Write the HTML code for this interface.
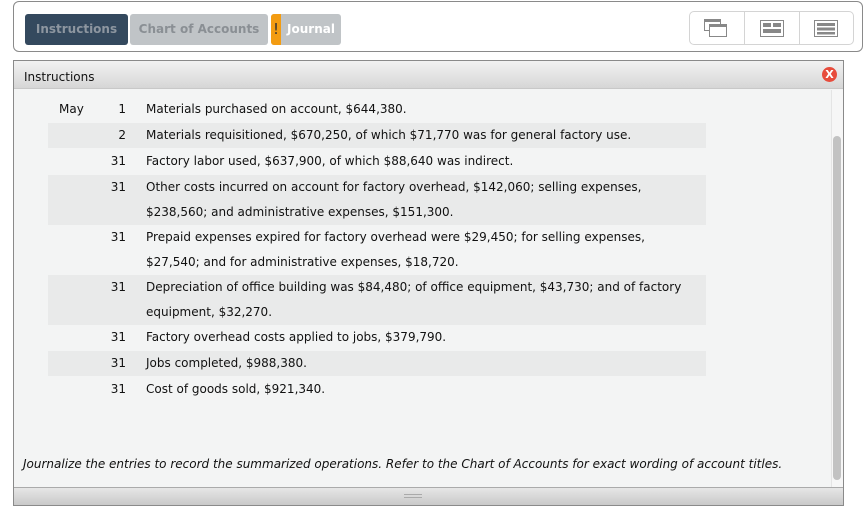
<!DOCTYPE html>
<html><head><style>
*{margin:0;padding:0;box-sizing:border-box}
body{width:868px;height:514px;background:#fff;font-family:"DejaVu Sans","Liberation Sans",sans-serif;position:relative;overflow:hidden}
.top{position:absolute;left:13px;top:1px;width:850px;height:51px;border:1px solid #8a8a8a;border-radius:6px;background:#fff}
.btn{position:absolute;top:12px;height:31px;border-radius:3px;font-weight:bold;font-size:12px;line-height:31px;text-align:center;color:#8a8f94;background:#c0c4c7}
.grp{position:absolute;left:675px;top:9px;width:165px;height:34px;border:1px solid #d4d4d4;border-radius:5px}
.grp div{position:absolute;top:0;height:32px;border-left:1px solid #d4d4d4}
.panel{position:absolute;left:13px;top:60px;width:831px;height:446px;border:1px solid #8a8a8a;background:#f3f4f4}
.hdr{height:28px;background:linear-gradient(#f2f2f2,#d6d6d6);border-bottom:1px solid #c8c8c8;font-size:12px;line-height:32px;padding-left:10px;color:#111}
.row{position:absolute;left:34px;width:658px;font-size:12px;line-height:25px;color:#111}
.row.s{background:#e9eaea}
.m{position:absolute;left:11px}
.d{position:absolute;left:40px;width:38px;text-align:right}
.t{margin-left:98px;white-space:nowrap}
.foot{position:absolute;left:0;bottom:0;width:829px;height:18px;background:linear-gradient(#e6e6e6,#c9c9c9);border-top:1px solid #aaa}
</style></head><body>
<div class="top">
 <div class="btn" style="left:11px;width:103px;background:#34495e;color:#8d96a0">Instructions</div>
 <div class="btn" style="left:116px;width:138px">Chart of Accounts</div>
 <div class="btn" style="left:257px;width:70px;color:#fff;overflow:hidden"><span style="position:absolute;left:0;top:0;width:10px;height:31px;background:#f39c12;color:#333;font-weight:normal;font-size:15px">!</span><span style="margin-left:10px">Journal</span></div>
 <div class="grp">
  <div style="left:54px"></div><div style="left:109px"></div>
  <svg style="position:absolute;left:14px;top:7px" width="24" height="20"><rect x="0.5" y="0.5" width="16" height="11" fill="#fff" stroke="#888"/><rect x="0" y="0" width="17" height="3" fill="#888"/><rect x="5.5" y="5.5" width="17" height="12" fill="#fff" stroke="#888"/><rect x="5" y="5" width="18" height="3" fill="#888"/></svg>
  <svg style="position:absolute;left:70px;top:8px" width="24" height="18"><rect x="0.5" y="0.5" width="23" height="16" fill="#fff" stroke="#888"/><rect x="3" y="3" width="8" height="4" fill="#888"/><rect x="13" y="3" width="8" height="4" fill="#888"/><rect x="3" y="9" width="18" height="4" fill="#888"/></svg>
  <svg style="position:absolute;left:124px;top:8px" width="24" height="18"><rect x="0.5" y="0.5" width="23" height="16" fill="#fff" stroke="#888"/><rect x="3" y="3" width="18" height="3" fill="#888"/><rect x="3" y="7.5" width="18" height="3" fill="#888"/><rect x="3" y="12" width="18" height="2.5" fill="#888"/></svg>
 </div>
</div>
<div class="panel">
 <div class="hdr">Instructions</div>
 <div style="position:absolute;right:6px;top:6px;width:15px;height:15px;border-radius:50%;background:#e74c3c;color:#fff;font-size:11px;line-height:15px;text-align:center;font-weight:bold">X</div>
 <div class="row" style="top:36px"><span class="m">May</span><span class="d">1</span><div class="t">Materials purchased on account, $644,380.</div></div>
 <div class="row s" style="top:62px"><span class="d">2</span><div class="t">Materials requisitioned, $670,250, of which $71,770 was for general factory use.</div></div>
 <div class="row" style="top:88px"><span class="d">31</span><div class="t">Factory labor used, $637,900, of which $88,640 was indirect.</div></div>
 <div class="row s" style="top:114px"><span class="d">31</span><div class="t">Other costs incurred on account for factory overhead, $142,060; selling expenses,<br>$238,560; and administrative expenses, $151,300.</div></div>
 <div class="row" style="top:164px"><span class="d">31</span><div class="t">Prepaid expenses expired for factory overhead were $29,450; for selling expenses,<br>$27,540; and for administrative expenses, $18,720.</div></div>
 <div class="row s" style="top:214px"><span class="d">31</span><div class="t">Depreciation of office building was $84,480; of office equipment, $43,730; and of factory<br>equipment, $32,270.</div></div>
 <div class="row" style="top:264px"><span class="d">31</span><div class="t">Factory overhead costs applied to jobs, $379,790.</div></div>
 <div class="row s" style="top:290px"><span class="d">31</span><div class="t">Jobs completed, $988,380.</div></div>
 <div class="row" style="top:316px"><span class="d">31</span><div class="t">Cost of goods sold, $921,340.</div></div>
 <div style="position:absolute;left:9px;top:396px;font-size:12px;font-style:italic;color:#111;white-space:nowrap">Journalize the entries to record the summarized operations. Refer to the Chart of Accounts for exact wording of account titles.</div>
 <div style="position:absolute;right:0;top:29px;width:12px;height:397px;background:#f6f6f6;border-left:1px solid #e4e4e4"></div>
 <div style="position:absolute;right:2px;top:75px;width:8px;height:344px;border-radius:4px;background:#c2c2c2"></div>
 <div class="foot"><div style="position:absolute;left:390px;top:6px;width:18px;height:4px;border-top:1px solid #aaa;border-bottom:1px solid #aaa"></div></div>
</div>
</body></html>
